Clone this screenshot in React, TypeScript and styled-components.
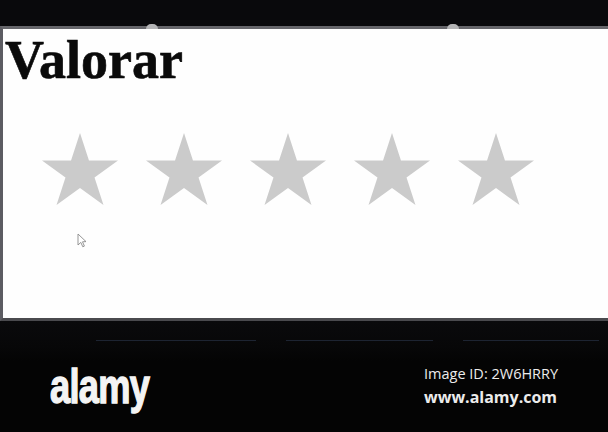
import React from "react";
import styled, { createGlobalStyle } from "styled-components";

const Global = createGlobalStyle`
  html, body { margin: 0; padding: 0; background: #060608; }
  body { width: 608px; height: 432px; overflow: hidden; }
`;

const Screen = styled.div`
  width: 608px;
  height: 432px;
  display: flex;
  flex-direction: column;
  background: #050505;
`;

const TopBar = styled.div`
  position: relative;
  height: 26px;
  background: #09090c;
`;

const Bump = styled.span<{ $left: number }>`
  position: absolute;
  left: ${(p) => p.$left}px;
  bottom: -3px;
  width: 12px;
  height: 5px;
  border-radius: 6px 6px 0 0;
  background: #b4b4b6;
  z-index: 2;
`;

const Panel = styled.section`
  position: relative;
  height: 285px;
  background: #fefefe;
  border-top: 3px solid #66666b;
  border-left: 3px solid #5c5c62;
  border-bottom: 3px solid #4a4a4e;
  padding: 4px 0 0 2px;
  box-sizing: content-box;
`;

const Title = styled.h1`
  margin: 0;
  font-family: "Liberation Serif", "Times New Roman", serif;
  font-weight: 700;
  font-size: 54px;
  line-height: 1;
  color: #0a0a0a;
  -webkit-text-stroke: 0.6px #0a0a0a;
`;

const Stars = styled.div`
  display: flex;
  gap: 28px;
  margin: 46px 0 0 37px;
`;

const StarSvg = styled.svg`
  width: 76px;
  height: 72px;
  display: block;
`;

const Cursor = styled.svg`
  position: absolute;
  left: 74px;
  top: 204px;
  width: 10px;
  height: 15px;
`;

const Footer = styled.footer`
  flex: 1;
  display: flex;
  flex-direction: column;
  background: linear-gradient(#0a0a0c 0px, #070708 26px, #040404 40px);
`;

const Rules = styled.div`
  display: grid;
  grid-template-columns: 160px 147px 136px;
  column-gap: 30px;
  padding-left: 96px;
  margin-top: 19px;
`;

const Rule = styled.div`
  height: 1px;
  background: #1d2432;
`;

const Brand = styled.div`
  display: grid;
  grid-template-columns: 374px auto;
  padding-left: 50px;
  margin-top: 21px;
`;

const Logo = styled.div`
  font-family: "Liberation Sans", Arial, sans-serif;
  font-weight: 700;
  font-size: 49px;
  line-height: 1;
  color: #f4f4f4;
  letter-spacing: -1px;
  -webkit-text-stroke: 1.4px #f4f4f4;
  transform: scaleX(0.74);
  transform-origin: left center;
  white-space: nowrap;
`;

const Info = styled.div`
  display: flex;
  flex-direction: column;
  gap: 7px;
  padding-top: 5px;
  font-family: "Open Sans", "Noto Sans", sans-serif;
  color: #ececec;
`;

const InfoLine = styled.div<{ $bold?: boolean }>`
  font-size: ${(p) => (p.$bold ? "16px" : "14.5px")};
  font-weight: ${(p) => (p.$bold ? 700 : 400)};
  line-height: 1;
  white-space: nowrap;
`;

const Star = () => (
  <StarSvg viewBox="0 0 100 95.1" preserveAspectRatio="none">
    <polygon
      fill="#cbcbcb"
      points="50,0 61.8,36.33 100,36.33 69.1,58.78 80.9,95.1 50,72.65 19.1,95.1 30.9,58.78 0,36.33 38.2,36.33"
    />
  </StarSvg>
);

export default function App() {
  return (
    <>
      <Global />
      <Screen>
        <TopBar>
          <Bump $left={146} />
          <Bump $left={447} />
        </TopBar>
        <Panel>
          <Title>Valorar</Title>
          <Stars>
            {[0, 1, 2, 3, 4].map((i) => (
              <Star key={i} />
            ))}
          </Stars>
          <Cursor viewBox="0 0 10 15">
            <path
              d="M1 1 L1 12 L3.8 9.4 L5.8 13.8 L7.4 13.1 L5.5 8.8 L9 8.6 Z"
              fill="#ffffff"
              stroke="#8a8a8a"
              strokeWidth="0.9"
              strokeLinejoin="round"
            />
          </Cursor>
        </Panel>
        <Footer>
          <Rules>
            <Rule />
            <Rule />
            <Rule />
          </Rules>
          <Brand>
            <Logo>alamy</Logo>
            <Info>
              <InfoLine>Image ID: 2W6HRRY</InfoLine>
              <InfoLine $bold>www.alamy.com</InfoLine>
            </Info>
          </Brand>
        </Footer>
      </Screen>
    </>
  );
}
